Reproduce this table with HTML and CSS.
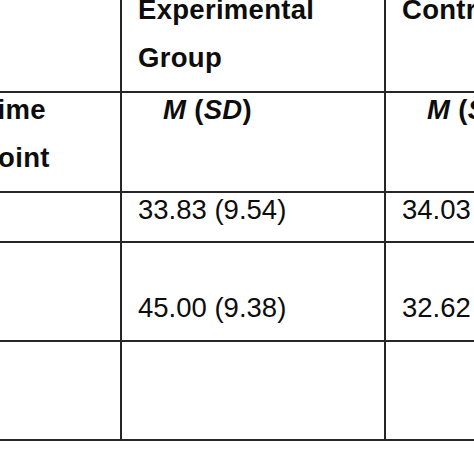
FILE: index.html
```html
<!DOCTYPE html>
<html lang="en">
<head>
<meta charset="utf-8">
<title>Group means table</title>
<link rel="stylesheet" href="styles.css">
</head>
<body>
<div class="crop">
  <table class="stats">
    <colgroup>
      <col class="c-time">
      <col class="c-group">
      <col class="c-group">
    </colgroup>
    <tr class="r-head">
      <td></td>
      <th><div class="cell">Experimental Group</div></th>
      <th><div class="cell">Control Group</div></th>
    </tr>
    <tr class="r-sub">
      <th><div class="cell">Time point</div></th>
      <th class="msd"><div class="cell"><i>M</i> (<i>SD</i>)</div></th>
      <th class="msd"><div class="cell"><i>M</i> (<i>SD</i>)</div></th>
    </tr>
    <tr class="r-one">
      <td></td>
      <td><div class="cell">33.83 (9.54)</div></td>
      <td><div class="cell">34.03</div></td>
    </tr>
    <tr class="r-two">
      <td></td>
      <td><div class="cell lower">45.00 (9.38)</div></td>
      <td><div class="cell lower">32.62</div></td>
    </tr>
    <tr class="r-two">
      <td></td>
      <td></td>
      <td></td>
    </tr>
  </table>
</div>
</body>
</html>
```

FILE: styles.css
```css
html, body {
  margin: 0;
  padding: 0;
  background: #ffffff;
  overflow: hidden;
}

.crop {
  width: 474px;
  height: 474px;
  overflow: hidden;
}

.stats {
  border-collapse: collapse;
  table-layout: fixed;
  width: 685px;
  margin: -9px 0 0 -37px;
  font-family: "Liberation Sans", Arial, Helvetica, sans-serif;
  font-size: 27.5px;
  line-height: 48px;
  color: #0d0d0d;
}

.c-time { width: 157px; }
.c-group { width: 264px; }

.stats td,
.stats th {
  border: 2px solid #262626;
  padding: 0 16px;
  vertical-align: top;
  text-align: left;
  font-weight: 400;
  overflow: visible;
}

.stats th {
  font-weight: 700;
  letter-spacing: 0.3px;
}

.stats th.msd {
  padding-left: 41px;
}

.cell {
  margin-top: -7px;
}

.cell.lower {
  padding-top: 48px;
}

.r-head { height: 100px; }
.r-sub { height: 100px; }
.r-one { height: 50px; }
.r-two { height: 99px; }
```
